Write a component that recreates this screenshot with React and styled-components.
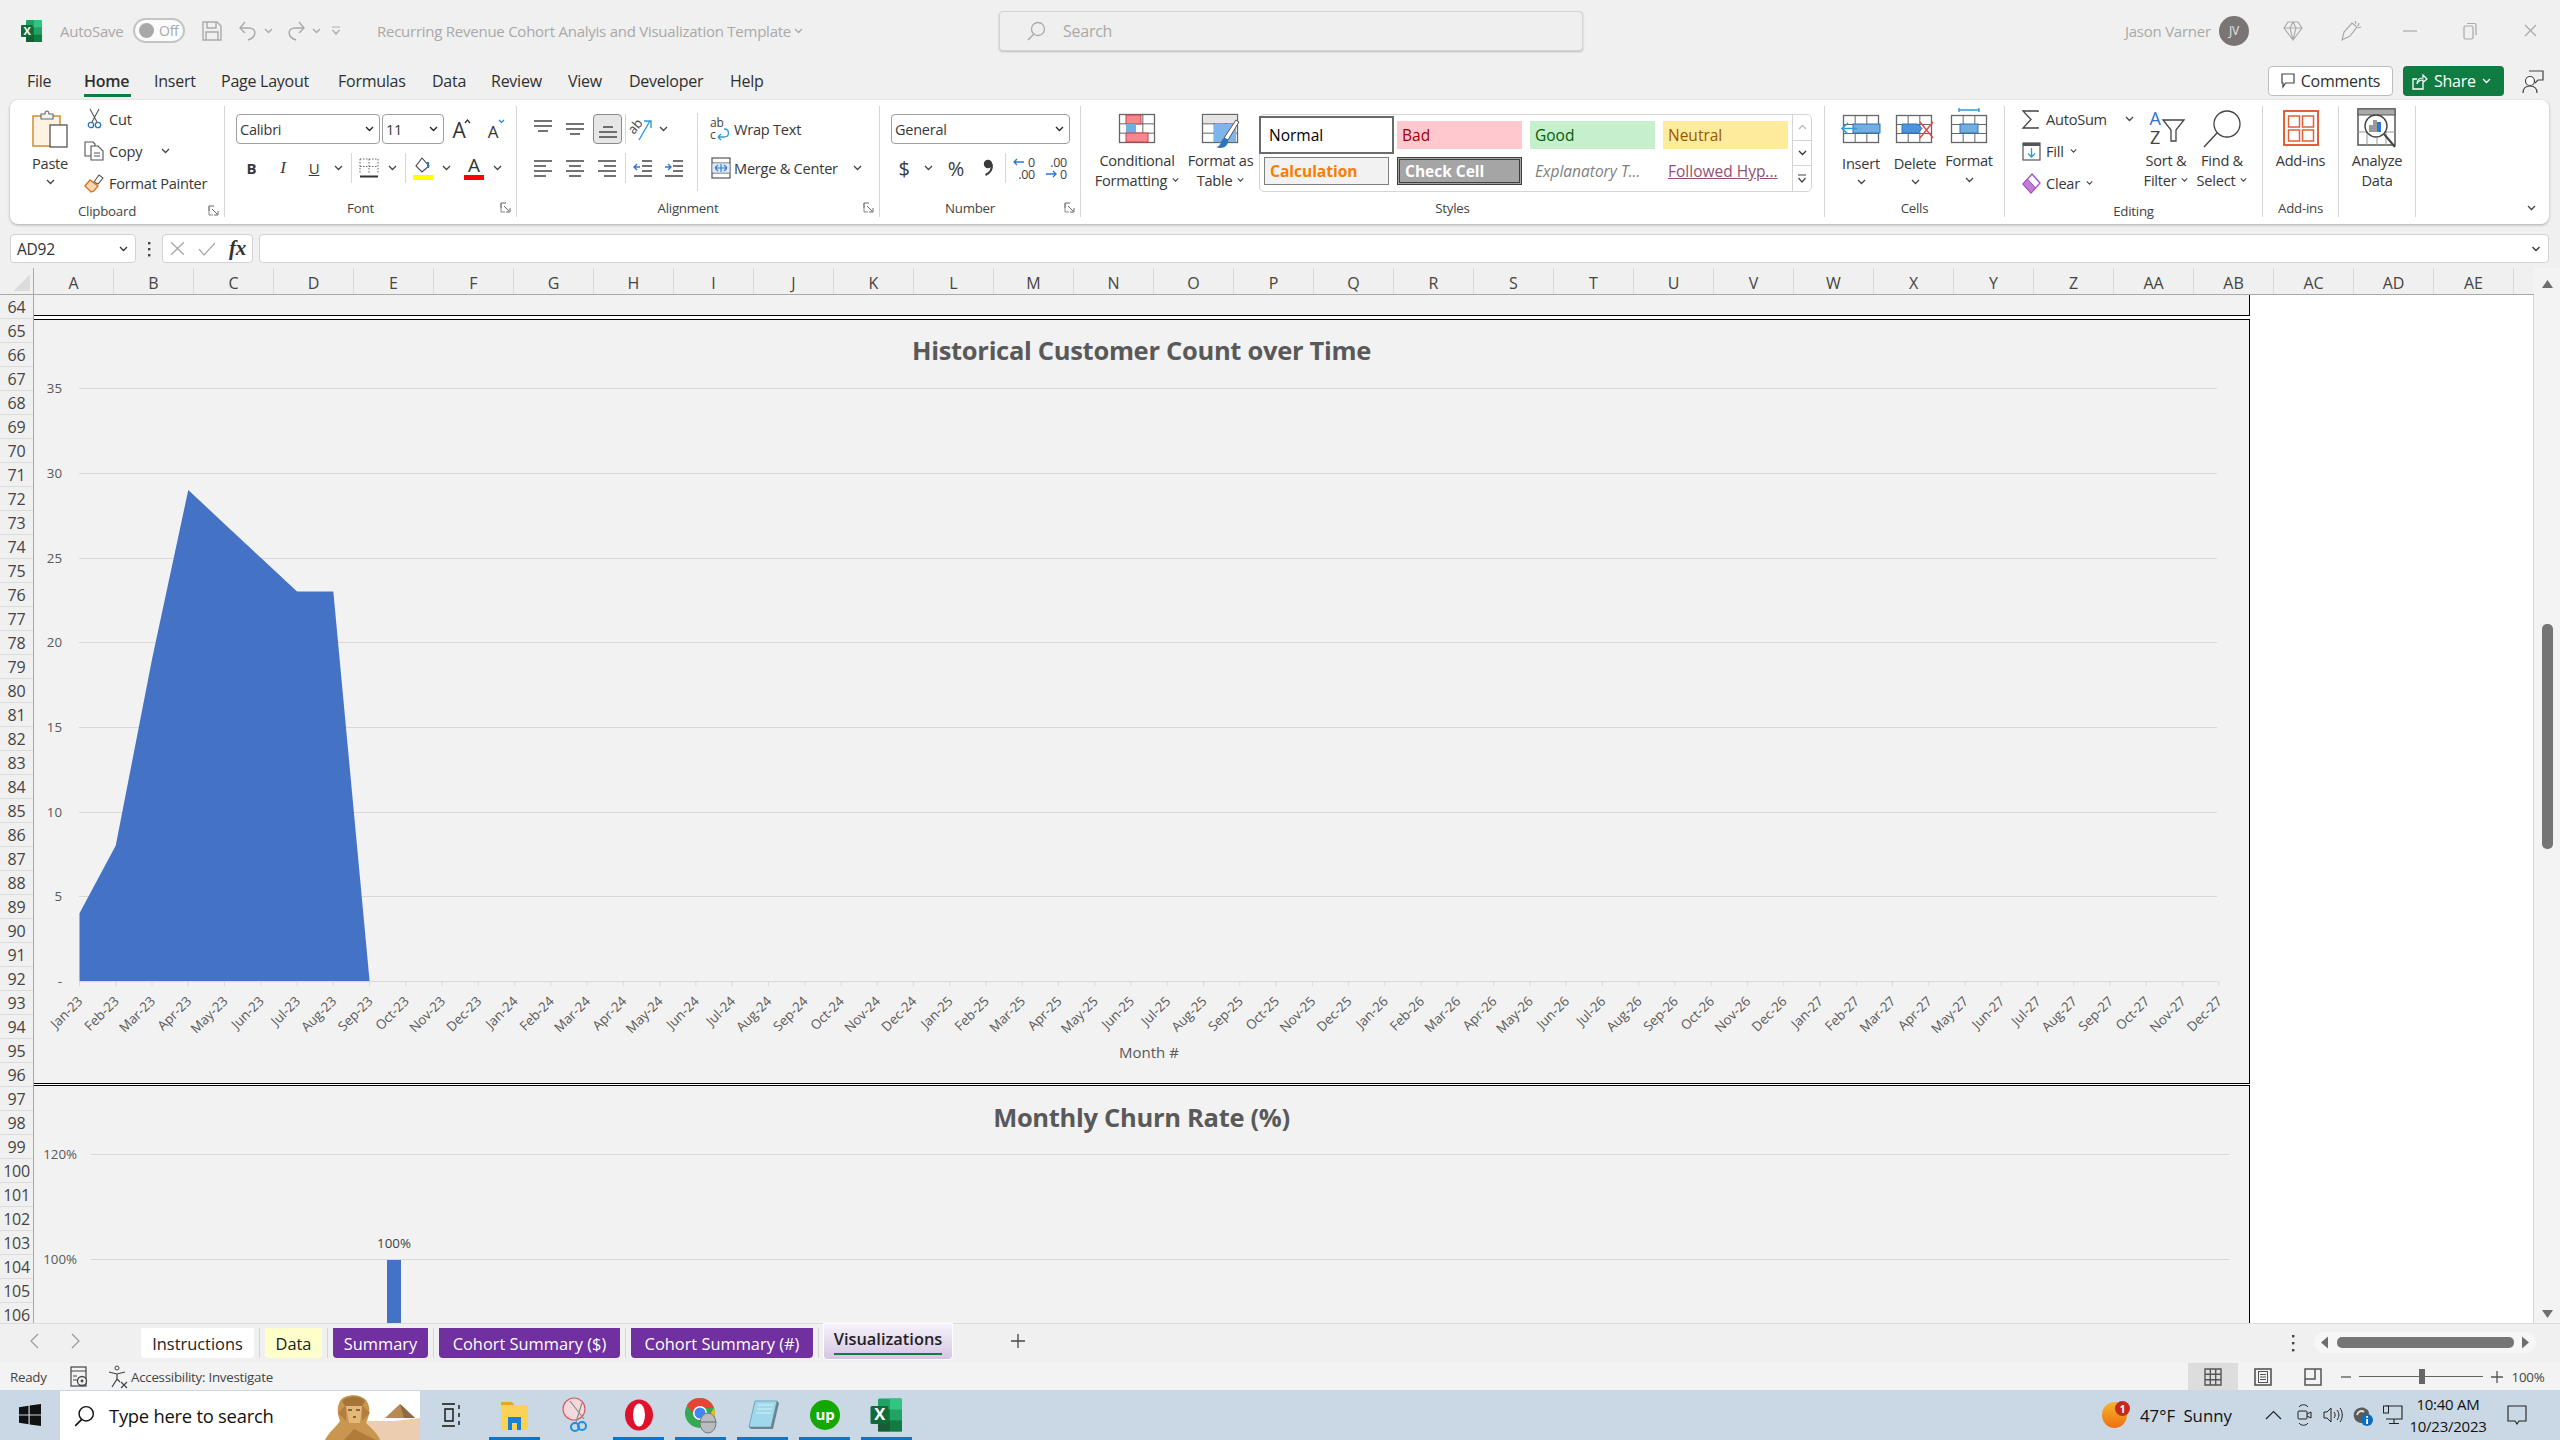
import React from "react";
import styled, { createGlobalStyle } from "styled-components";

const UI = `"Open Sans", "Noto Sans", "Liberation Sans", sans-serif`;
const DARK = "#444444";
const FADE = "#a9a9a9";

const GlobalStyle = createGlobalStyle`
  html, body { margin: 0; padding: 0; background: #f0f0f0; }
  body { font-family: ${UI}; color: #333; }
  * { box-sizing: border-box; }
`;

const Page = styled.div`
  width: 2560px;
  height: 1440px;
  display: flex;
  flex-direction: column;
  overflow: hidden;
  background: #f0f0f0;
  letter-spacing: -0.25px;
`;

/* ---------- title bar ---------- */
const TitleBar = styled.div`
  height: 62px;
  padding-bottom: 1px;
  display: flex;
  align-items: center;
  color: ${FADE};
  font-size: 15px;
`;
const Slot = styled.div`
  flex: none;
  width: ${(p) => p.$w}px;
  display: flex;
  align-items: center;
  white-space: nowrap;
  justify-content: ${(p) => (p.$left ? "flex-start" : "center")};
`;
const Toggle = styled.div`
  width: 52px;
  height: 25px;
  border: 2px solid #c4c4c4;
  border-radius: 13px;
  background: #fbfbfb;
  display: flex;
  align-items: center;
  padding-left: 4px;
  gap: 5px;
  font-size: 14px;
  &::before {
    content: "";
    width: 15px;
    height: 15px;
    border-radius: 50%;
    background: #a8a8a8;
  }
`;
const SearchBox = styled.div`
  width: 584px;
  height: 40px;
  border: 1px solid #d4d4d4;
  border-radius: 4px;
  box-shadow: 0 1px 2px rgba(0, 0, 0, 0.22);
  background: #efefef;
  display: flex;
  align-items: center;
  padding-left: 26px;
  gap: 17px;
  font-size: 16px;
`;
const Avatar = styled.div`
  width: 30px;
  height: 30px;
  border-radius: 50%;
  background: #7a7574;
  color: #e8e8e8;
  font-size: 12px;
  display: flex;
  align-items: center;
  justify-content: center;
`;

/* ---------- menu row ---------- */
const MenuBar = styled.div`
  height: 38px;
  display: flex;
  align-items: center;
  padding-left: 27px;
  font-size: 16px;
  color: #2f2f2f;
`;
const MenuItem = styled.div`
  flex: none;
  width: ${(p) => p.$w}px;
  height: 38px;
  line-height: 38px;
  position: relative;
  font-weight: ${(p) => (p.$active ? 600 : 400)};
  &::after {
    content: "";
    display: ${(p) => (p.$active ? "block" : "none")};
    position: absolute;
    left: 0;
    top: 32px;
    width: 47px;
    height: 3px;
    background: #107c41;
  }
`;
const CommentsButton = styled.div`
  width: 125px;
  height: 30px;
  border: 1px solid #bdbdbd;
  border-radius: 4px;
  background: #fff;
  display: flex;
  align-items: center;
  justify-content: center;
  gap: 6px;
  font-size: 16px;
  margin-left: 1498px;
`;
const ShareButton = styled.div`
  width: 101px;
  height: 30px;
  border-radius: 4px;
  background: #107c41;
  color: #fff;
  display: flex;
  align-items: center;
  gap: 6px;
  padding-left: 9px;
  font-size: 16px;
  margin-left: 10px;
`;

/* ---------- ribbon ---------- */
const Ribbon = styled.div`
  height: 124px;
  margin: 0 11px 0 10px;
  border-radius: 8px;
  background: #fff;
  box-shadow: 0 1px 3px rgba(0, 0, 0, 0.3);
  display: flex;
  position: relative;
  font-size: 14.6px;
  color: #383838;
`;
const Group = styled.div`
  flex: none;
  width: ${(p) => p.$w}px;
  height: 111px;
  margin-top: 6px;
  border-right: 1px solid #d6d6d6;
  display: flex;
  flex-direction: column;
`;
const GroupBody = styled.div`
  height: 96px;
  display: flex;
  padding-left: ${(p) => p.$pad || 0}px;
`;
const GroupLabel = styled.div`
  height: 18px;
  margin-top: 3px;
  display: flex;
  align-items: center;
  justify-content: center;
  font-size: 13.3px;
  padding-right: ${(p) => (p.$launcher ? 20 : 0)}px;
  position: relative;
  color: #444;
`;
const Launcher = styled.span`
  position: absolute;
  right: 5px;
  top: 3px;
  display: flex;
`;
const BigButton = styled.div`
  flex: none;
  width: ${(p) => p.$w}px;
  margin-top: 2px;
  display: flex;
  flex-direction: column;
  align-items: center;
  line-height: 20px;
  text-align: center;
  white-space: nowrap;
`;
const BigIcon = styled.div`
  height: 42px;
  display: flex;
  align-items: flex-start;
  justify-content: center;
  padding-top: ${(p) => p.$top ?? 2}px;
`;
const Line = styled.div`
  height: 20px;
  display: flex;
  align-items: center;
  gap: 5px;
  margin-top: ${(p) => p.$drop || 0}px;
`;
const SmallColumn = styled.div`
  flex: none;
  width: ${(p) => p.$w}px;
  margin-top: -3px;
  display: flex;
  flex-direction: column;
`;
const SmallRow = styled.div`
  height: 32px;
  display: flex;
  align-items: center;
  white-space: nowrap;
  gap: ${(p) => p.$gap ?? 6}px;
`;
const SmallIcon = styled.div`
  width: ${(p) => p.$w || 20}px;
  flex: none;
  display: flex;
  justify-content: center;
`;
const Stack = styled.div`
  display: flex;
  flex-direction: column;
  padding-top: 8px;
  gap: 9px;
  width: ${(p) => (p.$w ? `${p.$w}px` : "auto")};
  flex: none;
`;
const Row = styled.div`
  height: 30px;
  display: flex;
  align-items: center;
  gap: ${(p) => p.$gap || 0}px;
`;
const Cell = styled.div`
  flex: none;
  width: ${(p) => p.$w}px;
  height: 30px;
  display: flex;
  align-items: center;
  justify-content: center;
  font-size: ${(p) => p.$size || 15}px;
`;
const SelectedCell = styled(Cell)`
  border: 1px solid #8a8a8a;
  border-radius: 4px;
  background: #e6e6e6;
  margin: 0 1px 0 2px;
`;
const Divider = styled.div`
  flex: none;
  width: ${(p) => p.$w || 4}px;
  height: ${(p) => p.$h || 30}px;
  margin-top: ${(p) => p.$top || 0}px;
  background: linear-gradient(#d6d6d6, #d6d6d6) center / 1px 100% no-repeat;
`;
const ComboBox = styled.div`
  flex: none;
  width: ${(p) => p.$w}px;
  height: 30px;
  border: 1px solid #9f9f9f;
  border-radius: 4px;
  display: flex;
  align-items: center;
  justify-content: space-between;
  padding: 0 5px 0 3px;
  font-size: 14.5px;
`;
const LetterMark = styled.span`
  font-size: ${(p) => p.$size || 15}px;
  font-weight: ${(p) => p.$weight || 400};
  font-style: ${(p) => (p.$italic ? "italic" : "normal")};
  font-family: ${(p) => (p.$serif ? `"Liberation Serif", serif` : UI)};
  text-decoration: ${(p) => (p.$under ? "underline" : "none")};
  color: #3a3a3a;
`;

const Gallery = styled.div`
  flex: none;
  width: 553px;
  height: 78px;
  margin-top: 8px;
  border: 1px solid #d4d4d4;
  border-radius: 5px;
  display: flex;
`;
const GalleryGrid = styled.div`
  flex: 1;
  padding: 6px 0 0 4px;
  display: grid;
  grid-template-columns: repeat(4, 125px);
  grid-auto-rows: 28px;
  gap: 8px;
`;
const StyleCell = styled.div`
  padding-left: 5px;
  display: flex;
  align-items: center;
  font-size: 15.5px;
  letter-spacing: 0;
  white-space: nowrap;
  background: ${(p) => p.$bg || "transparent"};
  color: ${(p) => p.$color || "#000"};
  font-weight: ${(p) => (p.$bold ? 700 : 400)};
  font-style: ${(p) => (p.$italic ? "italic" : "normal")};
  border: ${(p) => p.$border || "none"};
  outline: ${(p) => (p.$selected ? "2px solid #6a6a6a" : "none")};
  outline-offset: 3px;
`;
const UnderlinedName = styled.span`
  text-decoration: underline;
`;
const GalleryScroll = styled.div`
  flex: none;
  width: 19px;
  border-left: 1px solid #d4d4d4;
  display: flex;
  flex-direction: column;
`;
const GalleryButton = styled.div`
  flex: 1;
  display: flex;
  align-items: center;
  justify-content: center;
  border-bottom: ${(p) => (p.$last ? "none" : "1px solid #d4d4d4")};
`;
const CollapseButton = styled.div`
  position: absolute;
  right: 11px;
  bottom: 13px;
  display: flex;
`;

/* ---------- formula bar ---------- */
const FormulaBar = styled.div`
  height: 29px;
  margin: 10px 11px 0 10px;
  display: flex;
  align-items: center;
`;
const NameBox = styled.div`
  flex: none;
  width: 126px;
  height: 29px;
  border: 1px solid #d2d2d2;
  border-radius: 4px;
  background: #fff;
  display: flex;
  align-items: center;
  justify-content: space-between;
  padding: 0 6px;
  font-size: 15.5px;
`;
const DotsSlot = styled.div`
  flex: none;
  width: 26px;
  display: flex;
  justify-content: center;
`;
const FxBox = styled.div`
  flex: none;
  width: 91px;
  height: 29px;
  border: 1px solid #d2d2d2;
  border-radius: 4px;
  background: #fff;
  display: flex;
  align-items: center;
  gap: 13px;
  padding-left: 7px;
`;
const FxMark = styled.span`
  font-family: "Liberation Serif", serif;
  font-style: italic;
  font-weight: 700;
  font-size: 21px;
  color: #333;
`;
const FormulaInput = styled.div`
  flex: 1;
  height: 29px;
  margin-left: 6px;
  border: 1px solid #d2d2d2;
  border-radius: 4px;
  background: #fff;
  display: flex;
  align-items: center;
  justify-content: flex-end;
  padding-right: 6px;
`;

/* ---------- sheet ---------- */
const GridArea = styled.div`
  flex: none;
  height: 1055px;
  margin-top: 5px;
  display: flex;
`;
const SheetColumn = styled.div`
  flex: none;
  width: 2534px;
  display: flex;
  flex-direction: column;
`;
const ColumnHeader = styled.div`
  flex: none;
  height: 27px;
  display: flex;
  border-bottom: 1px solid #a9a9a9;
`;
const Corner = styled.div`
  flex: none;
  width: 34px;
  display: flex;
  justify-content: flex-end;
  align-items: flex-end;
  padding: 0 3px 3px 0;
  border-right: 1px solid #a9a9a9;
  &::before {
    content: "";
    width: 16px;
    height: 16px;
    background: linear-gradient(135deg, transparent 50%, #dcdcdc 50%);
  }
`;
const ColumnCell = styled.div`
  flex: none;
  width: 80px;
  padding-top: 3px;
  border-right: 1px solid #d9d9d9;
  display: flex;
  align-items: center;
  justify-content: center;
  font-size: 16px;
  letter-spacing: 0;
  color: ${DARK};
`;
const SheetRow = styled.div`
  flex: 1;
  min-height: 0;
  display: flex;
`;
const RowHeader = styled.div`
  flex: none;
  width: 34px;
  overflow: hidden;
  border-right: 1px solid #a9a9a9;
`;
const RowCell = styled.div`
  height: 24px;
  padding-top: 1px;
  border-bottom: 1px solid #dcdcdc;
  display: flex;
  align-items: center;
  justify-content: center;
  font-size: 16px;
  color: ${DARK};
`;
const SheetBody = styled.div`
  flex: 1;
  min-width: 0;
  background: #fff;
  overflow: hidden;
  border-right: 1px solid #d4d4d4;
`;
const TopStub = styled.div`
  width: 2216px;
  height: 21px;
  background: #f2f2f2;
  border-right: 1px solid #000;
  border-bottom: 1px solid #000;
`;
const ChartPanel = styled.div`
  width: 2216px;
  height: ${(p) => p.$h}px;
  margin-top: ${(p) => p.$gap}px;
  background: #f2f2f2;
  border-top: 1px solid #000;
  border-right: 1px solid #000;
  border-bottom: ${(p) => (p.$closed ? "1px solid #000" : "none")};
  overflow: hidden;
`;
const ChartTitle = styled.div`
  height: ${(p) => p.$h}px;
  display: flex;
  align-items: center;
  justify-content: center;
  font-size: 25.5px;
  font-weight: 700;
  letter-spacing: -0.3px;
  color: #595959;
`;
const ChartSvg = styled.svg`
  display: block;
`;
const GridLine = styled.line`
  stroke: #d9d9d9;
  stroke-width: 1;
`;
const AxisText = styled.text`
  font-family: ${UI};
  font-size: ${(p) => p.$size || 13.3}px;
  fill: ${(p) => p.$fill || "#595959"};
  letter-spacing: 0;
`;
const VScroll = styled.div`
  flex: none;
  width: 26px;
  background: #f3f3f3;
  display: flex;
  flex-direction: column;
  align-items: center;
  padding: 11px 0 4px 0;
`;
const VThumb = styled.div`
  width: 11px;
  height: 225px;
  margin-top: 335px;
  border-radius: 5px;
  background: #757575;
`;
const VSpacer = styled.div`
  flex: 1;
`;

/* ---------- sheet tabs ---------- */
const TabBar = styled.div`
  flex: none;
  height: 40px;
  display: flex;
  align-items: flex-start;
  border-top: 1px solid #dcdcdc;
`;
const TabNav = styled.div`
  flex: none;
  width: 141px;
  height: 34px;
  display: flex;
  align-items: center;
  gap: 32px;
  padding-left: 30px;
`;
const SheetTab = styled.div`
  flex: none;
  width: ${(p) => p.$w}px;
  height: ${(p) => (p.$active ? 35 : 30)}px;
  margin-top: ${(p) => (p.$active ? 0 : 4)}px;
  padding: ${(p) => (p.$active ? "0 0 6px" : "1px 0 0")};
  border-radius: 0 0 4px 4px;
  background: ${(p) => p.$bg};
  color: ${(p) => p.$color || "#222"};
  font-size: 16.4px;
  letter-spacing: 0;
  font-weight: ${(p) => (p.$active ? 600 : 400)};
  display: flex;
  align-items: center;
  justify-content: center;
  position: relative;
  white-space: nowrap;
  box-shadow: ${(p) => (p.$active ? "0 0 0 1px #fff" : "none")};
  &::after {
    content: "";
    display: ${(p) => (p.$active ? "block" : "none")};
    position: absolute;
    left: 10px;
    right: 10px;
    top: 29px;
    height: 2px;
    background: #107c41;
  }
`;
const TabGap = styled.div`
  flex: none;
  width: 11px;
  height: 30px;
  margin-top: 4px;
  background: linear-gradient(#d4d4d4, #d4d4d4) center / 1px 100% no-repeat;
`;
const AddTab = styled.div`
  flex: none;
  margin-left: 54px;
  height: 34px;
  width: 24px;
  display: flex;
  align-items: center;
  justify-content: center;
`;
const TabRight = styled.div`
  margin-left: auto;
  margin-right: 24px;
  margin-top: 8px;
  display: flex;
  align-items: center;
  gap: 19px;
`;
const HScroll = styled.div`
  width: 222px;
  height: 21px;
  border-radius: 10px;
  background: #f6f6f6;
  display: flex;
  align-items: center;
  justify-content: space-between;
  padding: 0 6px;
`;
const HThumb = styled.div`
  width: 177px;
  height: 11px;
  border-radius: 5px;
  background: #757575;
`;

/* ---------- status bar ---------- */
const StatusBar = styled.div`
  flex: none;
  height: 27px;
  background: #f3f3f3;
  display: flex;
  align-items: center;
  font-size: 13.3px;
  color: #444;
  padding-left: 10px;
`;
const StatusGroup = styled.div`
  display: flex;
  align-items: center;
  width: ${(p) => p.$w}px;
  flex: none;
`;
const ViewButton = styled.div`
  flex: none;
  width: 50px;
  height: 27px;
  display: flex;
  align-items: center;
  justify-content: center;
  background: ${(p) => (p.$active ? "#dddddd" : "transparent")};
`;
const ZoomTrack = styled.div`
  flex: none;
  width: 124px;
  height: 1px;
  background: #666;
  position: relative;
  margin: 0 8px;
  &::after {
    content: "";
    position: absolute;
    left: 60px;
    top: -7px;
    width: 6px;
    height: 15px;
    background: #666;
  }
`;

/* ---------- taskbar ---------- */
const Taskbar = styled.div`
  flex: none;
  height: 50px;
  background: #c9d8e4;
  display: flex;
  align-items: center;
  color: #111;
`;
const TaskSearch = styled.div`
  flex: none;
  width: 360px;
  height: 49px;
  margin-top: 1px;
  background: #fff;
  display: flex;
  align-items: center;
  padding-left: 13px;
  gap: 14px;
  font-size: 18.4px;
  overflow: hidden;
`;
const TaskSpacer = styled.div`
  flex: none;
  margin-left: auto;
  display: flex;
`;
const TaskButton = styled.div`
  flex: none;
  width: 62px;
  height: 50px;
  display: flex;
  align-items: center;
  justify-content: center;
  position: relative;
  &::after {
    content: "";
    display: ${(p) => (p.$open ? "block" : "none")};
    position: absolute;
    left: 5px;
    right: 6px;
    bottom: 0;
    height: 3px;
    background: #0078d4;
  }
`;
const WeatherBadge = styled.div`
  position: relative;
  width: 25px;
  height: 26px;
  border-radius: 50%;
  background: linear-gradient(#f4b62c, #ef6f10);
`;
const BadgeCount = styled.span`
  position: absolute;
  right: -3px;
  top: -1px;
  width: 15px;
  height: 15px;
  border-radius: 50%;
  background: #c42b1c;
  color: #fff;
  font-size: 10px;
  font-weight: 700;
  display: flex;
  align-items: center;
  justify-content: center;
`;
const WeatherText = styled.div`
  font-size: 16.8px;
  letter-spacing: 0;
  word-spacing: 4px;
  white-space: nowrap;
`;
const Clock = styled.div`
  flex: none;
  width: 78px;
  text-align: center;
  font-size: 15px;
  line-height: 22px;
  white-space: nowrap;
`;

/* ---------- icons ---------- */
const Svg = ({ w, h, children, vb }) => (
  <svg width={w} height={h} viewBox={vb || `0 0 ${w} ${h}`} fill="none" style={{ display: "block", flex: "none", overflow: "visible" }}>
    {children}
  </svg>
);
const Chev = ({ c = "#444", w = 9, up }) => (
  <Svg w={w} h={6} vb="0 0 9 6">
    <path d={up ? "M1 5 L4.5 1.5 L8 5" : "M1 1 L4.5 4.5 L8 1"} stroke={c} strokeWidth="1.3" />
  </Svg>
);
const ExcelLogo = ({ s = 24 }) => (
  <Svg w={s} h={s} vb="0 0 24 24">
    <rect x="6" y="1" width="16" height="22" rx="1" fill="#21a366" />
    <rect x="14" y="1" width="8" height="7.3" fill="#33c481" />
    <rect x="6" y="8.3" width="8" height="7.3" fill="#107c41" />
    <rect x="14" y="15.6" width="8" height="7.4" fill="#107c41" />
    <rect x="6" y="15.6" width="8" height="7.4" fill="#185c37" />
    <rect x="1" y="6" width="12" height="12" rx="1" fill="#0f6b38" />
    <text x="7" y="15.6" fontSize="11" fontWeight="700" fill="#fff" textAnchor="middle" fontFamily={UI}>X</text>
  </Svg>
);
const SaveIcon = () => (
  <Svg w={20} h={20}>
    <path d="M1 1H15L19 5V19H1Z" stroke={FADE} strokeWidth="1.4" />
    <path d="M5 1V7H14V1M4 19V11H16V19" stroke={FADE} strokeWidth="1.4" />
  </Svg>
);
const UndoIcon = ({ flip }) => (
  <Svg w={18} h={20}>
    <g transform={flip ? "translate(18 0) scale(-1 1)" : undefined}>
      <path d="M1 7 H10 C18 7 18 16 9 19" stroke={FADE} strokeWidth="1.4" />
      <path d="M6 1 L1 7 L6 12" stroke={FADE} strokeWidth="1.4" />
    </g>
  </Svg>
);
const CustomizeIcon = () => (
  <Svg w={10} h={10}>
    <path d="M1 1H9M1.5 4 L5 8 L8.5 4" stroke={FADE} strokeWidth="1.2" />
  </Svg>
);
const Magnifier = ({ c = "#333", s = 20 }) => (
  <Svg w={s} h={s} vb="0 0 20 20">
    <circle cx="12" cy="8" r="6.5" stroke={c} strokeWidth="1.3" />
    <path d="M8 13 L2 19" stroke={c} strokeWidth="1.5" />
  </Svg>
);
const GemIcon = () => (
  <Svg w={20} h={20}>
    <path d="M5 1H15L19 7L10 19L1 7ZM1 7H19M7 7L10 19L13 7L10 1L7 7" stroke={FADE} strokeWidth="1.1" />
  </Svg>
);
const PenIcon = () => (
  <Svg w={22} h={22}>
    <path d="M2 20 L4 12 L12 3 L17 7 L10 16 Z M15 1 L16 4 M19 3 L18 6 M21 7 L18 8" stroke={FADE} strokeWidth="1.2" />
  </Svg>
);
const RestoreIcon = () => (
  <Svg w={14} h={18}>
    <rect x="1" y="4" width="9" height="13" rx="1.5" stroke={FADE} strokeWidth="1.2" />
    <path d="M4 1.5H11.5A1.5 1.5 0 0 1 13 3V13" stroke={FADE} strokeWidth="1.2" />
  </Svg>
);
const CloseIcon = ({ c = FADE, s = 13 }) => (
  <Svg w={s} h={s} vb="0 0 13 13">
    <path d="M1 1L12 12M12 1L1 12" stroke={c} strokeWidth="1.2" />
  </Svg>
);
const CommentIcon = ({ c = "#444" }) => (
  <Svg w={14} h={18}>
    <path d="M1 2H13V11H4.5L2 15V11H1Z" stroke={c} strokeWidth="1.2" />
  </Svg>
);
const ShareIcon = () => (
  <Svg w={16} h={18}>
    <path d="M1 7H5M11 11V17H1V7L3 7" stroke="#fff" strokeWidth="1.3" />
    <path d="M5 12 C5 7 8 6 11 6 V3 L15 7 L11 10.5 V8 C8 8 6 9 5 12" stroke="#fff" strokeWidth="1.2" />
  </Svg>
);
const PersonChatIcon = () => (
  <Svg w={22} h={26}>
    <path d="M7 3H21V12H16L13 15" stroke="#444" strokeWidth="1.2" />
    <circle cx="8" cy="13" r="4.5" fill="#fff" stroke="#444" strokeWidth="1.2" />
    <path d="M1 25C1 20 4 18 8 18S15 20 15 25" stroke="#444" strokeWidth="1.2" />
  </Svg>
);
const PasteIcon = () => (
  <Svg w={36} h={38}>
    <rect x="1" y="6" width="27" height="30" fill="#fdf3e3" stroke="#d98a2b" strokeWidth="1.5" />
    <path d="M9 9V4H13C13 0 17 0 17 4H21V9Z" fill="#f3f3f3" stroke="#666" strokeWidth="1.1" />
    <rect x="18" y="15" width="17" height="22" fill="#fff" stroke="#555" strokeWidth="1.3" />
  </Svg>
);
const ScissorsIcon = () => (
  <Svg w={15} h={20}>
    <path d="M3 0L10 13M12 0L5 13" stroke="#555" strokeWidth="1.1" />
    <circle cx="4" cy="16" r="2.7" stroke="#2e75b6" strokeWidth="1.3" />
    <circle cx="11" cy="16" r="2.7" stroke="#2e75b6" strokeWidth="1.3" />
  </Svg>
);
const CopyIcon = () => (
  <Svg w={20} h={20}>
    <path d="M1 1H9L11 3V15H1Z" fill="#fff" stroke="#555" strokeWidth="1.1" />
    <path d="M7 5H14L19 10V19H7Z" fill="#fff" stroke="#555" strokeWidth="1.1" />
    <path d="M10 12H16M10 15H16" stroke="#555" />
  </Svg>
);
const BrushIcon = () => (
  <Svg w={20} h={20}>
    <path d="M10 9L15 2L19 5L14 11Z" fill="#fff" stroke="#555" strokeWidth="1.1" />
    <path d="M6 7L14 13L10 18L7 19L1 13Z" fill="#f6d7ad" stroke="#d8742a" strokeWidth="1.4" />
  </Svg>
);
const LauncherIcon = () => (
  <Svg w={11} h={11}>
    <path d="M1 6V1H6M4 4L9 9M6 10H10V6" stroke="#666" strokeWidth="1" />
    <path d="M1 1V10H5" stroke="#888" strokeWidth="1" />
  </Svg>
);
const GrowFont = ({ down }) => (
  <Svg w={20} h={22}>
    <text x="7" y="20" fontSize={down ? 17 : 21} fontFamily={UI} fill="#333" textAnchor="middle">A</text>
    <path d={down ? "M13 2L15.5 4.5L18 2" : "M13 5L15.5 2L18 5"} stroke={down ? "#2b7cd3" : "#333"} strokeWidth="1.2" />
  </Svg>
);
const BorderIcon = () => (
  <Svg w={20} h={20}>
    <path d="M1 1H19V16M1 1V16M10 1V16M1 8.5H19" stroke="#666" strokeDasharray="1.5 1.5" />
    <path d="M1 18.5H19" stroke="#333" strokeWidth="2" />
  </Svg>
);
const FillIconMark = () => (
  <Svg w={20} h={24}>
    <path d="M9 2L16 10L9 16L3 10Z" fill="#fff" stroke="#444" strokeWidth="1.1" />
    <path d="M15 6V12" stroke="#2e75b6" strokeWidth="2" />
    <rect x="0" y="19" width="20" height="5" fill="#ffff00" />
  </Svg>
);
const FontColorMark = () => (
  <Svg w={20} h={24}>
    <text x="10" y="16" fontSize="19" fontFamily={UI} fill="#333" textAnchor="middle">A</text>
    <rect x="0" y="19" width="20" height="5" fill="#ff0000" />
  </Svg>
);
const CommaMark = () => (
  <Svg w={10} h={20}>
    <circle cx="5" cy="6" r="4.2" fill="#3a3a3a" />
    <path d="M8.8 6C9.5 11 7 15 2.5 17" stroke="#3a3a3a" strokeWidth="2" />
  </Svg>
);
const Lines = ({ rows }) => (
  <Svg w={20} h={20}>
    {rows.map(([x1, x2, y], i) => (
      <path key={i} d={`M${x1} ${y}H${x2}`} stroke="#444" strokeWidth="1.5" />
    ))}
  </Svg>
);
const alignRows = {
  top: [[1, 19, 2], [1, 19, 7], [5, 15, 12]],
  middle: [[1, 19, 5], [1, 19, 10], [5, 15, 15]],
  bottom: [[5, 15, 8], [1, 19, 13], [1, 19, 18]],
  left: [[1, 19, 3], [1, 13, 8], [1, 19, 13], [1, 13, 18]],
  center: [[1, 19, 3], [4, 16, 8], [1, 19, 13], [4, 16, 18]],
  right: [[1, 19, 3], [7, 19, 8], [1, 19, 13], [7, 19, 18]],
};
const OrientIcon = () => (
  <Svg w={24} h={24}>
    <text x="0" y="14" fontSize="13" fontFamily={UI} fill="#444" transform="rotate(-50 6 12)">ab</text>
    <path d="M9 23L20 4M14 4H21V11" stroke="#2e9bd9" strokeWidth="1.4" />
  </Svg>
);
const IndentIcon = ({ flip }) => (
  <Svg w={20} h={20}>
    <path d="M9 3H19M9 8H19M9 13H19M1 18H19" stroke="#444" strokeWidth="1.4" />
    <path d={flip ? "M1 9H7M4 6L7 9L4 12" : "M7 9H1M4 6L1 9L4 12"} stroke="#2e75d6" strokeWidth="1.4" />
  </Svg>
);
const WrapIcon = () => (
  <Svg w={22} h={24}>
    <text x="0" y="10" fontSize="12" fontFamily={UI} fill="#444">ab</text>
    <text x="0" y="22" fontSize="12" fontFamily={UI} fill="#444">c</text>
    <path d="M8 20H14C20 20 20 12 14 12M8 20L11 17M8 20L11 23" stroke="#2e9bd9" strokeWidth="1.3" />
  </Svg>
);
const MergeIcon = () => (
  <Svg w={20} h={22}>
    <rect x="1" y="1" width="18" height="20" fill="#fff" stroke="#555" strokeWidth="1.2" />
    <path d="M1 6H19M1 16H19" stroke="#555" />
    <rect x="1.5" y="6.5" width="17" height="9" fill="#dcebf9" />
    <path d="M4 11H16M4 11L7 8M4 11L7 14M16 11L13 8M16 11L13 14M10 7V15" stroke="#2e75d6" strokeWidth="1.1" />
  </Svg>
);
const DecimalIcon = ({ more }) => (
  <Svg w={22} h={24}>
    <text x="22" y="11" fontSize="12.5" fontFamily={UI} fill="#444" textAnchor="end">{more ? ".00" : "0"}</text>
    <text x="22" y="23" fontSize="12.5" fontFamily={UI} fill="#444" textAnchor="end">{more ? "0" : ".00"}</text>
    {more ? (
      <path d="M1 18H11M8 15L11 18L8 21" stroke="#2e75d6" strokeWidth="1.3" />
    ) : (
      <path d="M11 6H1M4 3L1 6L4 9" stroke="#2e75d6" strokeWidth="1.3" />
    )}
  </Svg>
);
const GridBase = ({ w, h, cols, rows, x = 0, y = 0, c = "#666" }) => (
  <g>
    <rect x={x + 0.5} y={y + 0.5} width={w} height={h} fill="#fff" stroke={c} strokeWidth="1.3" />
    {Array.from({ length: cols - 1 }, (_, i) => (
      <path key={i} d={`M${x + 0.5 + ((i + 1) * w) / cols} ${y}V${y + h}`} stroke={c} />
    ))}
    {Array.from({ length: rows - 1 }, (_, i) => (
      <path key={i} d={`M${x} ${y + 0.5 + ((i + 1) * h) / rows}H${x + w}`} stroke={c} />
    ))}
  </g>
);
const CondFormatIcon = () => (
  <Svg w={36} h={30}>
    <GridBase w={35} h={28} cols={3} rows={3} />
    <rect x="7" y="1" width="15" height="9" fill="#f8868f" stroke="#c3404a" />
    <rect x="7" y="10" width="10" height="9" fill="#72aee4" />
    <rect x="7" y="19" width="22" height="9" fill="#f8868f" stroke="#c3404a" />
  </Svg>
);
const TableFormatIcon = () => (
  <Svg w={38} h={34}>
    <GridBase w={35} h={28} cols={3} rows={3} />
    <rect x="1" y="1" width="34" height="8" fill="#e4e4e4" />
    <rect x="12" y="10" width="22" height="18" fill="#7db5ea" />
    <path d="M22 24L34 6L37 8L26 26Z" fill="#fff" stroke="#555" />
    <path d="M22 24C18 26 20 32 14 33C20 36 27 32 26 26Z" fill="#2e75b6" />
  </Svg>
);
const InsertIcon = () => (
  <Svg w={40} h={30}>
    <GridBase x={2} y={1} w={35} h={27} cols={3} rows={3} />
    <rect x="12" y="10" width="27" height="9" fill="#72aee4" stroke="#2e75b6" />
    <path d="M16 14.5H2M7 9L1 14.5L7 20" stroke="#2e9bd9" strokeWidth="1.6" />
  </Svg>
);
const DeleteIcon = () => (
  <Svg w={38} h={30}>
    <GridBase y={1} w={35} h={27} cols={3} rows={3} />
    <path d="M6 10H22L26 14.5L22 19H6Z" fill="#4c94dc" stroke="#2e75b6" />
    <path d="M24 8L37 24M37 8L24 24" stroke="#e5484d" strokeWidth="1.5" />
  </Svg>
);
const FormatCellIcon = () => (
  <Svg w={36} h={36}>
    <path d="M8 2H28M8 0V4M28 0V4" stroke="#2e9bd9" strokeWidth="1.4" />
    <GridBase y={7} w={35} h={27} cols={3} rows={3} />
    <rect x="9" y="16" width="18" height="9" fill="#72aee4" stroke="#2e75b6" />
  </Svg>
);
const SigmaIcon = () => (
  <Svg w={18} h={19}>
    <path d="M16 2V1H1L9 9.5L1 18H16V17" stroke="#444" strokeWidth="1.3" />
  </Svg>
);
const FillDownIcon = () => (
  <Svg w={19} h={19}>
    <rect x="1" y="1" width="17" height="17" fill="#fff" stroke="#555" strokeWidth="1.2" />
    <rect x="1" y="1" width="17" height="3" fill="#555" />
    <path d="M9.5 6V15M6 11.5L9.5 15L13 11.5" stroke="#2e9bd9" strokeWidth="1.3" />
  </Svg>
);
const EraserIcon = () => (
  <Svg w={19} h={21}>
    <path d="M10 1L18 10L9 20L1 11Z" fill="#fff" stroke="#a64ac9" strokeWidth="1.3" />
    <path d="M5.5 6L13.5 15L9 20L1 11Z" fill="#c27bd6" stroke="#a64ac9" />
  </Svg>
);
const SortIcon = () => (
  <Svg w={37} h={35}>
    <text x="7" y="14" fontSize="18" fontFamily={UI} fill="#2e75d6" textAnchor="middle">A</text>
    <text x="7" y="33" fontSize="18" fontFamily={UI} fill="#444" textAnchor="middle">Z</text>
    <path d="M15 9H36L28 19V30H23V19Z" stroke="#444" strokeWidth="1.3" />
  </Svg>
);
const FindIcon = () => (
  <Svg w={38} h={38}>
    <circle cx="24" cy="14" r="13" stroke="#444" strokeWidth="1.3" />
    <path d="M14 23L1 37" stroke="#444" strokeWidth="1.4" />
  </Svg>
);
const AddInsIcon = () => (
  <Svg w={36} h={36}>
    <rect x="1" y="1" width="34" height="34" stroke="#e0603a" strokeWidth="2" />
    <rect x="5.5" y="6" width="11" height="11" stroke="#e0603a" strokeWidth="1.5" />
    <rect x="19.5" y="6" width="11" height="11" stroke="#e0603a" strokeWidth="1.5" />
    <rect x="5.5" y="20" width="11" height="11" stroke="#e0603a" strokeWidth="1.5" />
    <rect x="19.5" y="20" width="11" height="11" stroke="#e0603a" strokeWidth="1.5" />
  </Svg>
);
const AnalyzeIcon = () => (
  <Svg w={40} h={40}>
    <rect x="1" y="1" width="37" height="36" fill="#fff" stroke="#555" strokeWidth="1.5" />
    <rect x="1" y="1" width="37" height="6" fill="#aaa" stroke="#555" />
    <path d="M1 24H38M10 24V37M20 30V37M29 24V37" stroke="#999" />
    <circle cx="19" cy="18" r="11" fill="#fff" stroke="#444" strokeWidth="1.4" />
    <rect x="12" y="17" width="4" height="7" fill="#999" />
    <rect x="16" y="12" width="4" height="12" fill="#999" />
    <rect x="20" y="14" width="4" height="10" fill="#2e75d6" />
    <path d="M27 26L38 39" stroke="#444" strokeWidth="2" />
  </Svg>
);
const MoreArrow = () => (
  <Svg w={10} h={10}>
    <path d="M1 1H9M1.5 4L5 8L8.5 4" stroke="#444" strokeWidth="1.2" />
  </Svg>
);
const Dots = ({ gap = 7 }) => (
  <Svg w={4} h={gap * 2 + 4}>
    {[0, 1, 2].map((i) => (
      <rect key={i} x="1" y={i * gap + 1} width="2.4" height="2.4" fill="#444" />
    ))}
  </Svg>
);
const Tri = ({ dir }) => {
  const d = { up: "M1 9L6.5 1L12 9Z", down: "M1 1L6.5 9L12 1Z", left: "M8 0.5L1 6.5L8 12.5Z", right: "M1 0.5L8 6.5L1 12.5Z" }[dir];
  const horiz = dir === "left" || dir === "right";
  return (
    <Svg w={horiz ? 9 : 13} h={horiz ? 13 : 10} vb={horiz ? "0 0 9 13" : "0 0 13 10"}>
      <path d={d} fill="#6e6e6e" />
    </Svg>
  );
};
const NavArrow = ({ right }) => (
  <Svg w={9} h={16}>
    <path d={right ? "M1 1L8 8L1 15" : "M8 1L1 8L8 15"} stroke="#9a9a9a" strokeWidth="1.2" />
  </Svg>
);
const MacroIcon = () => (
  <Svg w={18} h={22}>
    <rect x="1" y="1" width="15" height="19" stroke="#444" strokeWidth="1.2" />
    <path d="M1 5H16M3 10H7M3 14H7" stroke="#444" />
    <circle cx="12" cy="15" r="4.5" fill="#f3f3f3" stroke="#444" strokeWidth="1.3" />
    <circle cx="12" cy="15" r="1.4" fill="#444" />
  </Svg>
);
const AccessIcon = () => (
  <Svg w={20} h={24}>
    <circle cx="9" cy="3" r="2" stroke="#444" />
    <path d="M1 7L9 9L17 7M9 9V14L4 22M9 14L12 17" stroke="#444" strokeWidth="1.2" />
    <path d="M13 17L19 23M19 17L13 23" stroke="#444" strokeWidth="1.2" />
  </Svg>
);
const NormalViewIcon = () => (
  <Svg w={18} h={18}>
    <path d="M1 1H17V17H1ZM6.3 1V17M11.7 1V17M1 6.3H17M1 11.7H17" stroke="#555" strokeWidth="1.4" />
  </Svg>
);
const PageViewIcon = () => (
  <Svg w={18} h={18}>
    <rect x="1" y="1" width="16" height="16" stroke="#555" strokeWidth="1.6" />
    <rect x="4.5" y="3.5" width="9" height="11" stroke="#555" />
    <path d="M6 6.5H12M6 9H12M6 11.5H12" stroke="#555" />
  </Svg>
);
const BreakViewIcon = () => (
  <Svg w={18} h={18}>
    <path d="M1 1H17V17H1ZM1 11H11V1" stroke="#555" strokeWidth="1.5" />
  </Svg>
);
const WindowsLogo = () => (
  <Svg w={22} h={22}>
    <path d="M0 3.2L9.5 1.8V10.4H0ZM10.7 1.6L22 0V10.4H10.7ZM0 11.6H9.5V20.2L0 18.8ZM10.7 11.6H22V22L10.7 20.4Z" fill="#111" />
  </Svg>
);
const SphinxArt = () => (
  <Svg w={96} h={49}>
    <path d="M61 27L76 13L91 27Z" fill="#b78a55" />
    <path d="M76 13L91 27H80Z" fill="#8d6a40" />
    <path d="M28 49L40 30H70L96 27V49Z" fill="#eccdb0" />
    <path d="M1 49C6 40 12 36 16 30C14 24 12 18 16 10C20 3 36 2 42 9C47 16 46 24 42 32C48 38 54 43 56 49Z" fill="#c99650" />
    <path d="M18 10C24 4 36 4 41 10L38 15H21Z" fill="#a5743a" />
    <path d="M14 22L22 14V30ZM46 22L38 14V30Z" fill="#b27f3f" />
    <path d="M22 15H38L36 32H25Z" fill="#e3b878" />
    <path d="M24 19H28M32 19H36M29 26H32" stroke="#6e4a20" strokeWidth="1.4" />
    <path d="M30 38L52 49H20Z" fill="#b07c3c" />
  </Svg>
);
const TaskViewIcon = () => (
  <Svg w={20} h={24}>
    <path d="M0 1H13M0 23H13M3 6H11V18H3ZM17 2V6M17 10V14M17 18V22" stroke="#111" strokeWidth="1.4" />
  </Svg>
);
const FolderIcon = () => (
  <Svg w={30} h={31}>
    <path d="M1 2H12L15 6H1Z" fill="#e9a521" />
    <rect x="1" y="5" width="27" height="25" fill="#fad257" />
    <rect x="8" y="17" width="13" height="13" fill="#1c7ed6" />
    <rect x="12" y="23" width="5" height="7" fill="#fad257" />
  </Svg>
);
const SnipIcon = () => (
  <Svg w={30} h={36}>
    <circle cx="12" cy="12" r="11" fill="#f4d9dc" stroke="#d75a6a" strokeWidth="1.2" />
    <path d="M8 4L22 22M20 6L14 25" stroke="#8a8a8a" strokeWidth="1.2" />
    <circle cx="20" cy="29" r="4" stroke="#1c8fe0" strokeWidth="2" />
    <circle cx="13" cy="30" r="4" stroke="#1c8fe0" strokeWidth="2" />
  </Svg>
);
const OperaIcon = () => (
  <Svg w={30} h={32}>
    <ellipse cx="15" cy="16" rx="14" ry="15.5" fill="#e0122b" />
    <ellipse cx="15" cy="16" rx="6" ry="11.5" fill="#fff" />
  </Svg>
);
const ChromeIcon = () => (
  <Svg w={34} h={36}>
    <circle cx="16" cy="16" r="15" fill="#34a853" />
    <path d="M16 1A15 15 0 0 1 30 11H16C12 11 9 13 8 16L3 8A15 15 0 0 1 16 1Z" fill="#ea4335" />
    <path d="M30 11A15 15 0 0 1 18 31L25 19Z" fill="#fbbc05" />
    <circle cx="16" cy="16" r="7" fill="#fff" />
    <circle cx="16" cy="16" r="5.5" fill="#4285f4" />
    <ellipse cx="24" cy="26" rx="8" ry="10" fill="#b8bcc0" stroke="#777" />
    <path d="M16 25H32" stroke="#666" />
  </Svg>
);
const NotepadIcon = () => (
  <Svg w={32} h={30}>
    <path d="M8 1H30L24 27H2Z" fill="#9fd8ea" stroke="#6aa9bd" />
    <path d="M24 27L30 1L32 3L26 29H4L2 27Z" fill="#70808c" />
    <path d="M11 5H26M10 9H25M9 13H24" stroke="#d4f0f8" />
  </Svg>
);
const UpworkIcon = () => (
  <Svg w={30} h={30}>
    <circle cx="15" cy="15" r="15" fill="#14a800" />
    <text x="15" y="20" fontSize="15" fontWeight="700" fontFamily={UI} fill="#fff" textAnchor="middle">up</text>
  </Svg>
);
const TrayMeet = () => (
  <Svg w={15} h={24}>
    <path d="M2 4C4 1 9 1 11 4M2 20C4 23 9 23 11 20" stroke="#222" />
    <rect x="1" y="8" width="9" height="8" rx="1" stroke="#222" />
    <path d="M10 11L14 9V15L10 13" stroke="#222" />
  </Svg>
);
const TraySpeaker = () => (
  <Svg w={20} h={20}>
    <path d="M1 7H4L8 3V17L4 13H1Z" stroke="#222" />
    <path d="M11 7C12.5 9 12.5 11 11 13M14 5C16.5 8 16.5 12 14 15M17 3C20 7 20 13 17 17" stroke="#222" />
  </Svg>
);
const TrayCloud = () => (
  <Svg w={20} h={22}>
    <path d="M1 13C-1 6 8 1 13 5C16 6 16 9 16 10L10 19C5 19 2 17 1 13Z" fill="#5a5a5a" />
    <path d="M4 11C5 7 9 6 11 8" stroke="#ddd" strokeWidth="2" />
    <circle cx="14" cy="16" r="6" fill="#0f6cbd" />
    <rect x="13.2" y="15" width="1.8" height="5" fill="#fff" />
    <rect x="13.2" y="12" width="1.8" height="1.8" fill="#fff" />
  </Svg>
);
const TrayMonitor = () => (
  <Svg w={20} h={20}>
    <path d="M3 1H19V14H3M11 14V18M6 18.5H16" stroke="#222" strokeWidth="1.1" />
    <rect x="0.5" y="1" width="5" height="7" fill="#c9d8e4" stroke="#222" />
  </Svg>
);
const NotifyIcon = () => (
  <Svg w={20} h={21}>
    <path d="M1 1H19V16H12L10 19L8 16H1Z" stroke="#222" strokeWidth="1.1" />
  </Svg>
);

/* ---------- data ---------- */
const menu = [["File", 57], ["Home", 70], ["Insert", 67], ["Page Layout", 117], ["Formulas", 94], ["Data", 59], ["Review", 77], ["View", 61], ["Developer", 101], ["Help", 40]];
const colLetters = "A B C D E F G H I J K L M N O P Q R S T U V W X Y Z AA AB AC AD AE".split(" ");
const rowNumbers = Array.from({ length: 43 }, (_, i) => 64 + i);
const monthNames = ["Jan", "Feb", "Mar", "Apr", "May", "Jun", "Jul", "Aug", "Sep", "Oct", "Nov", "Dec"];
const monthLabels = [23, 24, 25, 26, 27].flatMap((y) => monthNames.map((m) => `${m}-${y}`));
const tickX = (i) => 79.5 + i * 36.26;
const yPos = (v) => 981 - v * 16.93;
const counts = [4, 8, 19, 29, 27, 25, 23, 23, 0];
const areaPoints = [`${tickX(0)},981`, ...counts.map((v, i) => `${tickX(i)},${yPos(v)}`)].join(" ");
const tabs = [
  { name: "Instructions", w: 113, bg: "#ffffff" },
  { name: "Data", w: 57, bg: "#ffffcc" },
  { name: "Summary", w: 95, bg: "#7030a0", color: "#fff" },
  { name: "Cohort Summary ($)", w: 181, bg: "#7030a0", color: "#fff" },
  { name: "Cohort Summary (#)", w: 182, bg: "#7030a0", color: "#fff" },
  { name: "Visualizations", w: 128, bg: "linear-gradient(#f6f2fa, #d5c5e5)", active: true },
];

const HistoricalChart = () => (
  <ChartSvg width="2215" height="703" viewBox="34 380 2215 703">
    {[0, 5, 10, 15, 20, 25, 30, 35].map((v) => (
      <g key={v}>
        <GridLine x1="79" x2="2217" y1={Math.round(yPos(v)) + 0.5} y2={Math.round(yPos(v)) + 0.5} />
        <AxisText x="62" y={yPos(v) + 5} textAnchor="end">{v === 0 ? "-" : v}</AxisText>
      </g>
    ))}
    <polygon points={areaPoints} fill="#4472c4" />
    {monthLabels.map((label, i) => (
      <g key={label}>
        <GridLine x1={tickX(i)} x2={tickX(i)} y1="981" y2="986" />
        <AxisText textAnchor="end" transform={`translate(${tickX(i) + 4} 1002) rotate(-45)`}>{label}</AxisText>
      </g>
    ))}
    <AxisText x="1149" y="1058" textAnchor="middle" $size={15}>Month #</AxisText>
  </ChartSvg>
);

const ChurnChart = () => (
  <ChartSvg width="2215" height="175" viewBox="34 1148 2215 175">
    {[[120, 1154], [100, 1259]].map(([v, y]) => (
      <g key={v}>
        <GridLine x1="91" x2="2229" y1={y + 0.5} y2={y + 0.5} />
        <AxisText x="77" y={y + 5} textAnchor="end">{v}%</AxisText>
      </g>
    ))}
    <rect x="387" y="1260" width="14" height="70" fill="#4472c4" />
    <AxisText x="394" y="1248" textAnchor="middle" $fill="#404040">100%</AxisText>
  </ChartSvg>
);

const App = () => (
  <Page>
    <GlobalStyle />
    <TitleBar>
      <Slot $w={20} />
      <Slot $w={24}><ExcelLogo /></Slot>
      <Slot $w={16} />
      <Slot $w={73} $left>AutoSave</Slot>
      <Toggle>Off</Toggle>
      <Slot $w={17} />
      <Slot $w={20}><SaveIcon /></Slot>
      <Slot $w={17} />
      <Slot $w={18}><UndoIcon /></Slot>
      <Slot $w={22}><Chev c={FADE} /></Slot>
      <Slot $w={8} />
      <Slot $w={18}><UndoIcon flip /></Slot>
      <Slot $w={22}><Chev c={FADE} /></Slot>
      <Slot $w={18}><CustomizeIcon /></Slot>
      <Slot $w={32} />
      <Slot $w={413} $left>Recurring Revenue Cohort Analyis and Visualization Template</Slot>
      <Slot $w={16}><Chev c={FADE} /></Slot>
      <Slot $w={193} />
      <SearchBox><Magnifier c={FADE} />Search</SearchBox>
      <Slot $w={542} />
      <Slot $w={83} $left>Jason Varner</Slot>
      <Slot $w={11} />
      <Avatar>JV</Avatar>
      <Slot $w={29} />
      <Slot $w={30}><GemIcon /></Slot>
      <Slot $w={28} />
      <Slot $w={30}><PenIcon /></Slot>
      <Slot $w={29} />
      <Slot $w={30}><Svg w={14} h={2}><path d="M0 1H14" stroke={FADE} strokeWidth="1.2" /></Svg></Slot>
      <Slot $w={30} />
      <Slot $w={30}><RestoreIcon /></Slot>
      <Slot $w={30} />
      <Slot $w={30}><CloseIcon /></Slot>
    </TitleBar>

    <MenuBar>
      {menu.map(([label, w]) => (
        <MenuItem key={label} $w={w} $active={label === "Home"}>{label}</MenuItem>
      ))}
      <CommentsButton><CommentIcon />Comments</CommentsButton>
      <ShareButton><ShareIcon />Share<Chev c="#fff" /></ShareButton>
      <Slot $w={18} />
      <PersonChatIcon />
    </MenuBar>

    <Ribbon>
      <Group $w={215}>
        <GroupBody $pad={12}>
          <BigButton $w={56}>
            <BigIcon $top={2}><PasteIcon /></BigIcon>
            <Line $drop={3}>Paste</Line>
            <Line $drop={-1}><Chev /></Line>
          </BigButton>
          <Slot $w={6} />
          <SmallColumn $w={124}>
            <SmallRow $gap={5}><SmallIcon><ScissorsIcon /></SmallIcon>Cut</SmallRow>
            <SmallRow $gap={5}><SmallIcon><CopyIcon /></SmallIcon>Copy<Slot $w={36}><Chev /></Slot></SmallRow>
            <SmallRow $gap={5}><SmallIcon><BrushIcon /></SmallIcon>Format Painter</SmallRow>
          </SmallColumn>
        </GroupBody>
        <GroupLabel $launcher>Clipboard<Launcher><LauncherIcon /></Launcher></GroupLabel>
      </Group>

      <Group $w={292}>
        <GroupBody $pad={11}>
          <Stack>
            <Row>
              <ComboBox $w={144}>Calibri<Chev c="#222" /></ComboBox>
              <Slot $w={2} />
              <ComboBox $w={62}>11<Chev c="#222" /></ComboBox>
              <Slot $w={6} />
              <Cell $w={24}><GrowFont /></Cell>
              <Slot $w={10} />
              <Cell $w={24}><GrowFont down /></Cell>
            </Row>
            <Row>
              <Cell $w={31}><LetterMark $weight={700}>B</LetterMark></Cell>
              <Cell $w={32}><LetterMark $italic $serif $size={17}>I</LetterMark></Cell>
              <Cell $w={30}><LetterMark $under>U</LetterMark></Cell>
              <Cell $w={18}><Chev /></Cell>
              <Divider $w={8} />
              <Cell $w={28}><BorderIcon /></Cell>
              <Cell $w={18}><Chev /></Cell>
              <Divider $w={8} />
              <Cell $w={28}><FillIconMark /></Cell>
              <Cell $w={18}><Chev /></Cell>
              <Cell $w={38}><FontColorMark /></Cell>
              <Cell $w={8}><Chev /></Cell>
            </Row>
          </Stack>
        </GroupBody>
        <GroupLabel $launcher>Font<Launcher><LauncherIcon /></Launcher></GroupLabel>
      </Group>

      <Group $w={363}>
        <GroupBody $pad={10}>
          <Stack $w={163}>
            <Row>
              <Cell $w={32}><Lines rows={alignRows.top} /></Cell>
              <Cell $w={32}><Lines rows={alignRows.middle} /></Cell>
              <SelectedCell $w={29}><Lines rows={alignRows.bottom} /></SelectedCell>
              <Divider />
              <Cell $w={30}><OrientIcon /></Cell>
              <Cell $w={12}><Chev /></Cell>
            </Row>
            <Row>
              <Cell $w={32}><Lines rows={alignRows.left} /></Cell>
              <Cell $w={32}><Lines rows={alignRows.center} /></Cell>
              <Cell $w={32}><Lines rows={alignRows.right} /></Cell>
              <Divider />
              <Cell $w={31}><IndentIcon /></Cell>
              <Cell $w={32}><IndentIcon flip /></Cell>
            </Row>
          </Stack>
          <Divider $w={14} $h={78} $top={7} />
          <Slot $w={6} />
          <Stack>
            <Row $gap={3}><SmallIcon $w={21}><WrapIcon /></SmallIcon>Wrap Text</Row>
            <Row $gap={3}><SmallIcon $w={21}><MergeIcon /></SmallIcon>Merge &amp; Center<Slot $w={34}><Chev /></Slot></Row>
          </Stack>
        </GroupBody>
        <GroupLabel $launcher>Alignment<Launcher><LauncherIcon /></Launcher></GroupLabel>
      </Group>

      <Group $w={201}>
        <GroupBody $pad={11}>
          <Stack>
            <Row><ComboBox $w={179}>General<Chev c="#222" /></ComboBox></Row>
            <Row>
              <Cell $w={26}><LetterMark $size={20}>$</LetterMark></Cell>
              <Cell $w={22}><Chev /></Cell>
              <Cell $w={34}><LetterMark $size={20}>%</LetterMark></Cell>
              <Cell $w={30}><CommaMark /></Cell>
              <Divider />
              <Cell $w={34}><DecimalIcon /></Cell>
              <Cell $w={29}><DecimalIcon more /></Cell>
            </Row>
          </Stack>
        </GroupBody>
        <GroupLabel $launcher>Number<Launcher><LauncherIcon /></Launcher></GroupLabel>
      </Group>

      <Group $w={744}>
        <GroupBody $pad={11}>
          <BigButton $w={90}>
            <BigIcon $top={6}><CondFormatIcon /></BigIcon>
            <Line>Conditional</Line>
            <Line>Formatting<Chev w={7} /></Line>
          </BigButton>
          <BigButton $w={77}>
            <BigIcon $top={6}><TableFormatIcon /></BigIcon>
            <Line>Format as</Line>
            <Line>Table<Chev w={7} /></Line>
          </BigButton>
          <Gallery>
            <GalleryGrid>
              <StyleCell $selected>Normal</StyleCell>
              <StyleCell $bg="#ffc7ce" $color="#9c0006">Bad</StyleCell>
              <StyleCell $bg="#c6efce" $color="#006100">Good</StyleCell>
              <StyleCell $bg="#ffeb9c" $color="#9c5700">Neutral</StyleCell>
              <StyleCell $bg="#f2f2f2" $color="#fa7d00" $bold $border="1px solid #7f7f7f">Calculation</StyleCell>
              <StyleCell $bg="#a5a5a5" $color="#fff" $bold $border="3px double #3f3f3f">Check Cell</StyleCell>
              <StyleCell $color="#7f7f7f" $italic>Explanatory T...</StyleCell>
              <StyleCell $color="#954f72"><UnderlinedName>Followed Hyp...</UnderlinedName></StyleCell>
            </GalleryGrid>
            <GalleryScroll>
              <GalleryButton><Chev c="#bbb" up /></GalleryButton>
              <GalleryButton><Chev c="#333" /></GalleryButton>
              <GalleryButton $last><MoreArrow /></GalleryButton>
            </GalleryScroll>
          </Gallery>
        </GroupBody>
        <GroupLabel>Styles</GroupLabel>
      </Group>

      <Group $w={180}>
        <GroupBody $pad={9}>
          <BigButton $w={54}>
            <BigIcon $top={6}><InsertIcon /></BigIcon>
            <Line $drop={3}>Insert</Line>
            <Line $drop={-1}><Chev /></Line>
          </BigButton>
          <BigButton $w={54}>
            <BigIcon $top={6}><DeleteIcon /></BigIcon>
            <Line $drop={3}>Delete</Line>
            <Line $drop={-1}><Chev /></Line>
          </BigButton>
          <BigButton $w={54}>
            <BigIcon $top={0}><FormatCellIcon /></BigIcon>
            <Line>Format</Line>
            <Line><Chev /></Line>
          </BigButton>
        </GroupBody>
        <GroupLabel>Cells</GroupLabel>
      </Group>

      <Group $w={258}>
        <GroupBody $pad={17}>
          <SmallColumn $w={118}>
            <SmallRow><SmallIcon $w={18}><SigmaIcon /></SmallIcon>AutoSum<Slot $w={34}><Chev /></Slot></SmallRow>
            <SmallRow><SmallIcon $w={18}><FillDownIcon /></SmallIcon>Fill<Chev w={7} /></SmallRow>
            <SmallRow><SmallIcon $w={18}><EraserIcon /></SmallIcon>Clear<Chev w={7} /></SmallRow>
          </SmallColumn>
          <BigButton $w={52}>
            <BigIcon $top={3}><SortIcon /></BigIcon>
            <Line>Sort &amp;</Line>
            <Line>Filter<Chev w={7} /></Line>
          </BigButton>
          <BigButton $w={60}>
            <BigIcon $top={2}><FindIcon /></BigIcon>
            <Line>Find &amp;</Line>
            <Line>Select<Chev w={7} /></Line>
          </BigButton>
        </GroupBody>
        <GroupLabel>Editing</GroupLabel>
      </Group>

      <Group $w={76}>
        <GroupBody>
          <BigButton $w={75}>
            <BigIcon $top={2}><AddInsIcon /></BigIcon>
            <Line>Add-ins</Line>
          </BigButton>
        </GroupBody>
        <GroupLabel>Add-ins</GroupLabel>
      </Group>

      <Group $w={77}>
        <GroupBody>
          <BigButton $w={76}>
            <BigIcon $top={0}><AnalyzeIcon /></BigIcon>
            <Line>Analyze</Line>
            <Line>Data</Line>
          </BigButton>
        </GroupBody>
        <GroupLabel />
      </Group>

      <CollapseButton><Chev w={13} c="#444" /></CollapseButton>
    </Ribbon>

    <FormulaBar>
      <NameBox>AD92<Chev c="#333" w={11} /></NameBox>
      <DotsSlot><Dots gap={6} /></DotsSlot>
      <FxBox>
        <CloseIcon c="#aaa" s={15} />
        <Svg w={18} h={14}><path d="M1 7L6 13L17 1" stroke="#aaa" strokeWidth="1.2" /></Svg>
        <FxMark>fx</FxMark>
      </FxBox>
      <FormulaInput><Chev c="#333" w={12} /></FormulaInput>
    </FormulaBar>

    <GridArea>
      <SheetColumn>
        <ColumnHeader>
          <Corner />
          {colLetters.map((c) => <ColumnCell key={c}>{c}</ColumnCell>)}
        </ColumnHeader>
        <SheetRow>
          <RowHeader>
            {rowNumbers.map((n) => <RowCell key={n}>{n}</RowCell>)}
          </RowHeader>
          <SheetBody>
            <TopStub />
            <ChartPanel $h={765} $gap={3} $closed>
              <ChartTitle $h={60}>Historical Customer Count over Time</ChartTitle>
              <HistoricalChart />
            </ChartPanel>
            <ChartPanel $h={240} $gap={1}>
              <ChartTitle $h={62}>Monthly Churn Rate (%)</ChartTitle>
              <ChurnChart />
            </ChartPanel>
          </SheetBody>
        </SheetRow>
      </SheetColumn>
      <VScroll>
        <Tri dir="up" />
        <VThumb />
        <VSpacer />
        <Tri dir="down" />
      </VScroll>
    </GridArea>

    <TabBar>
      <TabNav><NavArrow /><NavArrow right /></TabNav>
      {tabs.map((t, i) => (
        <React.Fragment key={t.name}>
          {i > 0 && <TabGap />}
          <SheetTab $w={t.w} $bg={t.bg} $color={t.color} $active={t.active}>{t.name}</SheetTab>
        </React.Fragment>
      ))}
      <AddTab>
        <Svg w={14} h={14}><path d="M7 0V14M0 7H14" stroke="#444" strokeWidth="1.3" /></Svg>
      </AddTab>
      <TabRight>
        <Dots gap={7} />
        <HScroll><Tri dir="left" /><HThumb /><Tri dir="right" /></HScroll>
      </TabRight>
    </TabBar>

    <StatusBar>
      <StatusGroup $w={60}>Ready</StatusGroup>
      <StatusGroup $w={38}><MacroIcon /></StatusGroup>
      <StatusGroup $w={2080}>
        <AccessIcon />
        <Slot $w={3} />
        Accessibility: Investigate
      </StatusGroup>
      <ViewButton $active><NormalViewIcon /></ViewButton>
      <ViewButton><PageViewIcon /></ViewButton>
      <ViewButton><BreakViewIcon /></ViewButton>
      <Slot $w={3} />
      <Svg w={10} h={2}><path d="M0 1H10" stroke="#555" strokeWidth="1.3" /></Svg>
      <ZoomTrack />
      <Svg w={12} h={12}><path d="M6 0V12M0 6H12" stroke="#555" strokeWidth="1.3" /></Svg>
      <Slot $w={50}>100%</Slot>
    </StatusBar>

    <Taskbar>
      <Slot $w={60}><WindowsLogo /></Slot>
      <TaskSearch>
        <Magnifier c="#111" s={22} />
        Type here to search
        <TaskSpacer><SphinxArt /></TaskSpacer>
      </TaskSearch>
      <Slot $w={22} />
      <Slot $w={20}><TaskViewIcon /></Slot>
      <Slot $w={22} />
      <TaskButton $open><FolderIcon /></TaskButton>
      <TaskButton><SnipIcon /></TaskButton>
      <TaskButton $open><OperaIcon /></TaskButton>
      <TaskButton $open><ChromeIcon /></TaskButton>
      <TaskButton $open><NotepadIcon /></TaskButton>
      <TaskButton $open><UpworkIcon /></TaskButton>
      <TaskButton $open><ExcelLogo s={36} /></TaskButton>
      <Slot $w={1184} />
      <WeatherBadge><BadgeCount>1</BadgeCount></WeatherBadge>
      <Slot $w={13} />
      <Slot $w={125} $left><WeatherText>47°F Sunny</WeatherText></Slot>
      <Slot $w={17}><Svg w={17} h={10}><path d="M1 9L8.5 1.5L16 9" stroke="#222" strokeWidth="1.2" /></Svg></Slot>
      <Slot $w={15} />
      <Slot $w={15}><TrayMeet /></Slot>
      <Slot $w={11} />
      <Slot $w={20}><TraySpeaker /></Slot>
      <Slot $w={10} />
      <Slot $w={20}><TrayCloud /></Slot>
      <Slot $w={10} />
      <Slot $w={20}><TrayMonitor /></Slot>
      <Slot $w={6} />
      <Clock>10:40 AM<br />10/23/2023</Clock>
      <Slot $w={20} />
      <Slot $w={20}><NotifyIcon /></Slot>
    </Taskbar>
  </Page>
);

export default App;
